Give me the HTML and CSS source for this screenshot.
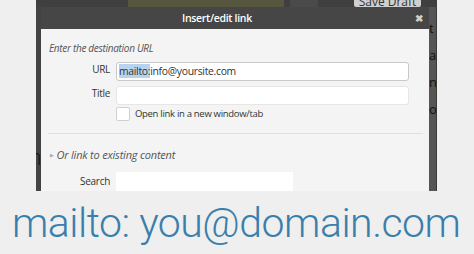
FILE: index.html
```html
<!DOCTYPE html>
<html lang="en">
<head>
    <meta charset="UTF-8">
    <title>mailto link</title>
    <link rel="stylesheet" href="styles.css">
</head>
<body>
    <div class="screen">
        <div class="gutter"></div>

        <div class="backdrop">
            <div class="topbar">
                <span class="bar-slug"></span>
                <span class="bar-btn"></span>
                <span class="bar-save">Save Draft</span>
            </div>

            <div class="stage">
                <div class="edge-left"><span>ך</span></div>

                <div class="dialog">
                    <div class="dialog-head">
                        <span class="dialog-title">Insert/edit link</span>
                        <span class="dialog-close">&#10006;</span>
                    </div>
                    <div class="dialog-body">
                        <p class="hint">Enter the destination URL</p>

                        <div class="field">
                            <label>URL</label>
                            <div class="input url"><span class="sel">mailto:</span>info@yoursite.com</div>
                        </div>
                        <div class="field">
                            <label>Title</label>
                            <div class="input plain"></div>
                        </div>
                        <div class="check-row">
                            <span class="checkbox"></span>
                            <span>Open link in a new window/tab</span>
                        </div>

                        <hr class="divider">

                        <p class="toggle"><span class="arrow">&#9654;</span> Or link to existing content</p>

                        <div class="field search">
                            <label>Search</label>
                            <div class="input search-box"></div>
                        </div>
                    </div>
                </div>

                <div class="edge-right">
                    <span>t</span>
                    <span>at</span>
                    <span>ne</span>
                    <span>oi</span>
                </div>
            </div>
        </div>
    </div>

    <div class="caption">mailto: you@domain.com</div>
</body>
</html>
```

FILE: styles.css
```css
body {
    margin: 0;
    width: 474px;
    height: 254px;
    overflow: hidden;
    background-color: #efefef;
    font-family: 'Open Sans', 'Liberation Sans', sans-serif;
    color: #333;
}

.screen {
    display: flex;
    height: 191px;
}

.gutter {
    width: 36px;
}

.backdrop {
    width: 401px;
    background-color: #434343;
    display: flex;
    flex-direction: column;
}

/* editor showing through the overlay */
.topbar {
    height: 7px;
    display: flex;
    overflow: hidden;
    background-color: #3f3f3f;
}

.bar-slug {
    width: 156px;
    margin-left: 92px;
    background-color: #56563f;
}

.bar-btn {
    width: 28px;
    margin-left: 6px;
    background-color: #4a4a4a;
}

.bar-save {
    width: 67px;
    margin-left: 36px;
    background-color: #cfcfcf;
    color: #333;
    font-size: 12px;
    line-height: 4px;
    text-align: center;
    border-radius: 0 0 2px 2px;
}

.stage {
    flex: 1;
    display: flex;
    min-height: 0;
}

.edge-left {
    width: 5px;
    overflow: hidden;
    font-size: 14px;
    color: #111;
}

.edge-left span {
    display: block;
    margin-top: 140px;
    margin-left: -2px;
}

.edge-right {
    width: 7px;
    background-color: #555;
    border-right: 1px solid #3a3a3a;
    overflow: hidden;
    display: flex;
    flex-direction: column;
    gap: 13px;
    font-size: 13px;
    line-height: 14px;
    color: #111;
    padding-top: 14px;
    white-space: nowrap;
}

.dialog {
    width: 389px;
    display: flex;
    flex-direction: column;
}

.dialog-head {
    height: 22px;
    background-color: #464646;
    display: flex;
    align-items: center;
    justify-content: space-between;
    padding: 0 6px 0 141px;
}

.dialog-title {
    color: #fff;
    font-size: 10.5px;
    letter-spacing: -0.3px;
    font-weight: 600;
}

.dialog-close {
    color: #cfcfcf;
    font-size: 10px;
    font-weight: bold;
}

.dialog-body {
    flex: 1;
    background-color: #f4f4f4;
    padding: 11px 6px 0 8px;
    overflow: hidden;
}

.hint, .toggle {
    margin: 0;
    font-size: 10px;
    letter-spacing: -0.3px;
    font-style: italic;
    color: #555;
    line-height: 16px;
}

.field {
    display: flex;
    align-items: center;
    gap: 6px;
    font-size: 10px;
    letter-spacing: -0.3px;
    line-height: 14px;
}

.field label {
    width: 61px;
    text-align: right;
}

.input {
    width: 289px;
    height: 17px;
    background-color: #fff;
    border: 1px solid #e6e6e6;
    border-radius: 3px;
    line-height: 17px;
    padding-left: 2px;
    color: #333;
    font-size: 10.4px;
}

.input.url {
    border-color: #c8c8c8;
    margin-top: 6px;
}

.input.plain {
    margin-top: 5px;
}

.sel {
    background-color: #b8d3f0;
}

.check-row {
    display: flex;
    align-items: center;
    gap: 5px;
    margin: 2px 0 0 67px;
    font-size: 9.5px;
    letter-spacing: -0.3px;
    line-height: 14px;
    color: #333;
}

.checkbox {
    width: 12px;
    height: 12px;
    background-color: #fff;
    border: 1px solid #d0d0d0;
    border-radius: 2px;
}

.divider {
    border: 0;
    border-top: 1px solid #e0e0e0;
    margin: 12px 0 0 -1px;
}

.toggle {
    margin-top: 13px;
    font-size: 11px;
    letter-spacing: -0.2px;
}

.arrow {
    font-size: 5px;
    font-style: normal;
    color: #aaa;
    vertical-align: 2px;
    margin-left: 1px;
}

.field.search {
    margin-top: 9px;
    align-items: flex-start;
}

.field.search label {
    margin-top: 2px;
}

.input.search-box {
    width: 175px;
    height: 30px;
    border: 0;
    border-radius: 0;
}

.caption {
    height: 60px;
    padding: 3px 0 0 12px;
    font-family: 'Roboto', 'Liberation Sans', sans-serif;
    font-weight: 300;
    font-size: 41px;
    letter-spacing: -0.5px;
    line-height: 58px;
    color: #3a7fab;
    white-space: nowrap;
}
```
